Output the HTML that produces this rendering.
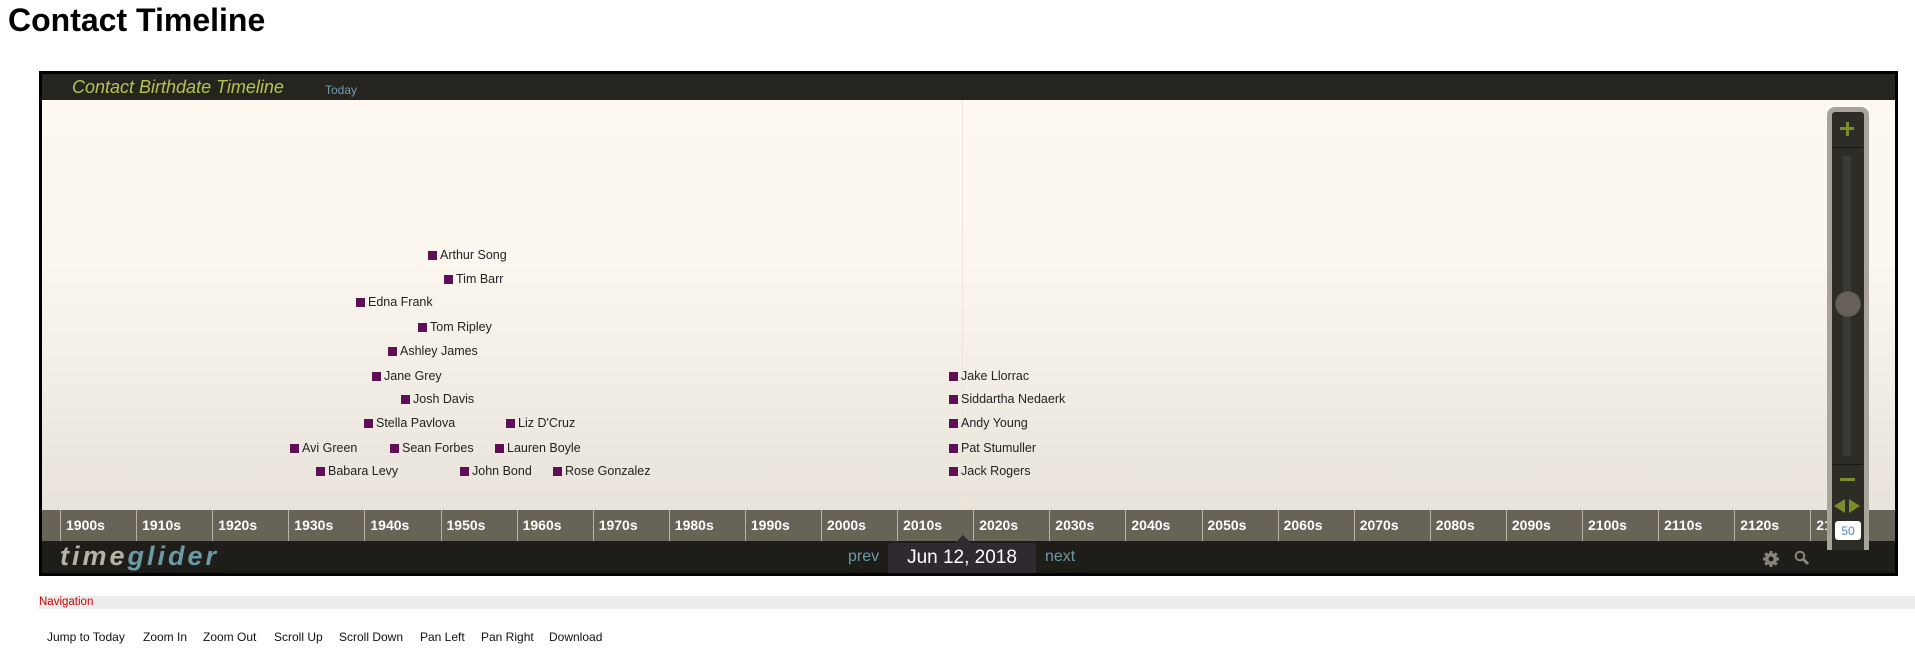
<!DOCTYPE html>
<html><head><meta charset="utf-8"><style>
body{margin:0;width:1915px;height:648px;background:#fff;font-family:"Liberation Sans",Arial,sans-serif;position:relative;overflow:hidden}
.a{position:absolute}
h1{position:absolute;left:8px;top:2px;margin:0;font-size:32px;font-weight:bold;color:#000}
#w{left:39px;top:71px;width:1853px;height:499px;border:3px solid #000;background:#1f1d19}
.ev{position:absolute;font-size:12.5px;color:#222;white-space:nowrap;line-height:14px}
.ev i{display:inline-block;width:9px;height:9px;background:#5f0f55;margin-right:3px;vertical-align:-1px}
.dl{position:absolute;top:0;height:31px;border-left:1px solid #b8b2a6;color:#fff;font-weight:bold;font-size:14px;padding-left:5px;line-height:30px}
.nv{position:absolute;top:630px;font-size:12px;color:#111}
</style></head><body>
<h1>Contact Timeline</h1>
<div id="w" class="a">
 <div class="a" style="left:0;top:0;width:1853px;height:26px;background:#26241f"></div>
 <div class="a" style="left:30px;top:3px;font-size:18px;font-style:italic;color:#b5c450">Contact Birthdate Timeline</div>
 <div class="a" style="left:283px;top:9px;font-size:12px;color:#6f9fb5">Today</div>
 <div class="a" style="left:0;top:26px;width:1853px;height:410px;background:linear-gradient(#fdf9f1,#fbf7ee 40%,#e8e3da)"></div>
 <div class="a" style="left:920px;top:26px;width:1px;height:410px;background:#ece6da"></div>
 <div class="a" id="ax" style="left:0;top:436px;width:1853px;height:31px;background:#686357;overflow:hidden"></div>
</div>
<div class="a" style="left:0;top:0">
<div class="ev" style="left:428px;top:248px"><i></i>Arthur Song</div>
<div class="ev" style="left:444px;top:272px"><i></i>Tim Barr</div>
<div class="ev" style="left:356px;top:295px"><i></i>Edna Frank</div>
<div class="ev" style="left:418px;top:320px"><i></i>Tom Ripley</div>
<div class="ev" style="left:388px;top:344px"><i></i>Ashley James</div>
<div class="ev" style="left:372px;top:369px"><i></i>Jane Grey</div>
<div class="ev" style="left:401px;top:392px"><i></i>Josh Davis</div>
<div class="ev" style="left:364px;top:416px"><i></i>Stella Pavlova</div>
<div class="ev" style="left:506px;top:416px"><i></i>Liz D'Cruz</div>
<div class="ev" style="left:290px;top:441px"><i></i>Avi Green</div>
<div class="ev" style="left:390px;top:441px"><i></i>Sean Forbes</div>
<div class="ev" style="left:495px;top:441px"><i></i>Lauren Boyle</div>
<div class="ev" style="left:316px;top:464px"><i></i>Babara Levy</div>
<div class="ev" style="left:460px;top:464px"><i></i>John Bond</div>
<div class="ev" style="left:553px;top:464px"><i></i>Rose Gonzalez</div>
<div class="ev" style="left:949px;top:369px"><i></i>Jake Llorrac</div>
<div class="ev" style="left:949px;top:392px"><i></i>Siddartha Nedaerk</div>
<div class="ev" style="left:949px;top:416px"><i></i>Andy Young</div>
<div class="ev" style="left:949px;top:441px"><i></i>Pat Stumuller</div>
<div class="ev" style="left:949px;top:464px"><i></i>Jack Rogers</div>
</div>
<div class="a" style="left:60px;top:541px;font-size:27px;font-weight:bold;font-style:italic;letter-spacing:3px"><span style="color:#b8b2a6">time</span><span style="color:#6a9aa4">glider</span></div>
<div class="a" style="left:848px;top:548px;font-size:16px;color:#6a9aa4">prev</div>
<div class="a" style="left:955px;top:535px;width:0;height:0;border-left:8px solid transparent;border-right:8px solid transparent;border-bottom:8px solid #2f2a30"></div>
<div class="a" style="left:888px;top:543px;width:148px;height:30px;background:#2f2a30;border-radius:3px 3px 0 0;color:#fff;font-size:19px;text-align:center;line-height:30px">Jun 12, 2018</div>
<div class="a" style="left:1045px;top:548px;font-size:16px;color:#6a9aa4">next</div>
<svg class="a" style="left:1762px;top:550px" width="18" height="18" viewBox="0 0 18 18"><g fill="#8a857b"><circle cx="9" cy="9" r="6"/><g stroke="#8a857b" stroke-width="3"><line x1="9" y1="1" x2="9" y2="17"/><line x1="1" y1="9" x2="17" y2="9"/><line x1="3.3" y1="3.3" x2="14.7" y2="14.7"/><line x1="14.7" y1="3.3" x2="3.3" y2="14.7"/></g></g><circle cx="9" cy="9" r="2.5" fill="#1f1d19"/></svg>
<svg class="a" style="left:1794px;top:550px" width="16" height="16" viewBox="0 0 16 16"><circle cx="6" cy="6" r="4.3" fill="none" stroke="#8a857b" stroke-width="2"/><line x1="9" y1="9" x2="14" y2="14" stroke="#8a857b" stroke-width="3"/></svg>
<div class="a" style="left:1827px;top:107px;width:32px;height:438px;border:5px solid #a8a49a;border-bottom:none;border-radius:8px 8px 0 0;background:#2e2c27"></div>
<div class="a" style="left:1840px;top:127px;width:14px;height:3px;background:#7c8c2a"></div>
<div class="a" style="left:1845.5px;top:122px;width:3px;height:14px;background:#7c8c2a"></div>
<div class="a" style="left:1832px;top:147px;width:31px;height:1px;background:#1a1915"></div>
<div class="a" style="left:1843px;top:156px;width:8px;height:300px;background:#3b3933"></div>
<div class="a" style="left:1835px;top:291px;width:24px;height:24px;border-radius:50%;background:#66625a;border:1px solid #55514a"></div>
<div class="a" style="left:1832px;top:464px;width:31px;height:1px;background:#1a1915"></div>
<div class="a" style="left:1840px;top:478px;width:15px;height:3px;background:#7c8c2a"></div>
<div class="a" style="left:1834px;top:499px;border-top:7px solid transparent;border-bottom:7px solid transparent;border-right:11px solid #7c8c2a"></div>
<div class="a" style="left:1849px;top:499px;border-top:7px solid transparent;border-bottom:7px solid transparent;border-left:11px solid #7c8c2a"></div>
<div class="a" style="left:1835px;top:521px;width:26px;height:19px;background:#fff;border-radius:3px;color:#5a85c0;font-size:12px;text-align:center;line-height:20px">50</div>
<div class="a" style="left:39px;top:596px;width:1876px;height:13px;background:#ececec"></div>
<div class="a" style="left:39px;top:596px;font-size:11.5px;color:#c00;line-height:13px">Navigation</div>
<div class="nv" style="left:47px">Jump to Today</div>
<div class="nv" style="left:143px">Zoom In</div>
<div class="nv" style="left:203px">Zoom Out</div>
<div class="nv" style="left:274px">Scroll Up</div>
<div class="nv" style="left:339px">Scroll Down</div>
<div class="nv" style="left:420px">Pan Left</div>
<div class="nv" style="left:481px">Pan Right</div>
<div class="nv" style="left:549px">Download</div>
<script>
var ax=document.getElementById('ax'),h='';
for(var k=0;k<24;k++){var x=18+76.1*k;h+='<div class="dl" style="left:'+x.toFixed(1)+'px">'+(1900+k*10)+'s</div>';}
ax.innerHTML=h;
</script>
</body></html>
